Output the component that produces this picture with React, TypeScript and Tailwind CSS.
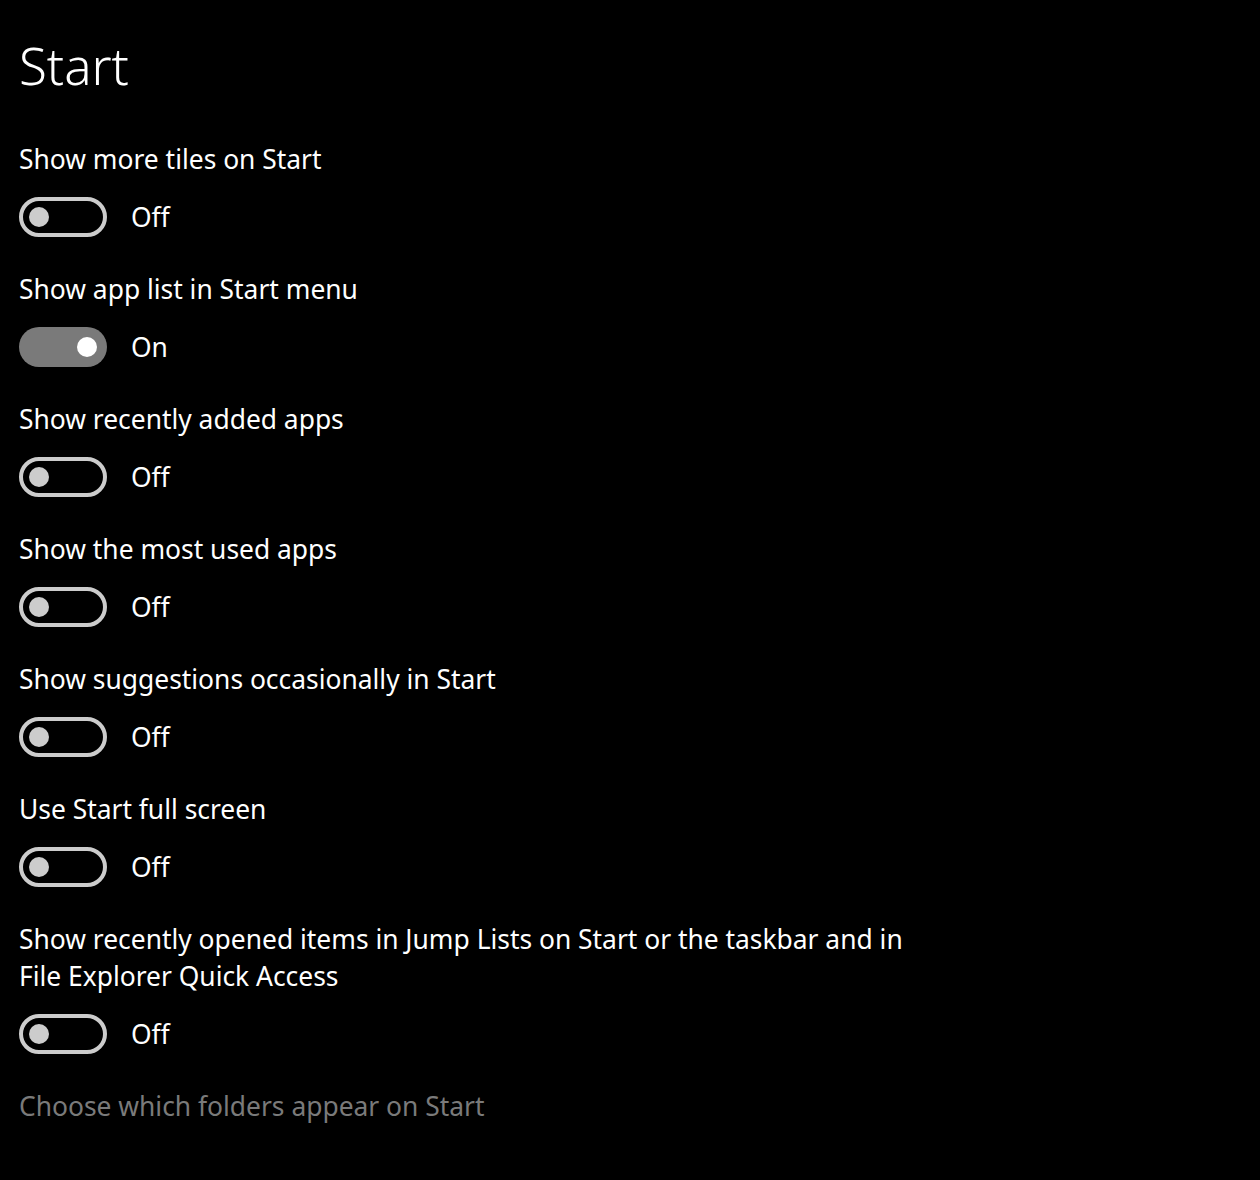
import { useState } from "react";

type Setting = {
  label: string;
  on: boolean;
};

const initialSettings: Setting[] = [
  { label: "Show more tiles on Start", on: false },
  { label: "Show app list in Start menu", on: true },
  { label: "Show recently added apps", on: false },
  { label: "Show the most used apps", on: false },
  { label: "Show suggestions occasionally in Start", on: false },
  { label: "Use Start full screen", on: false },
  {
    label:
      "Show recently opened items in Jump Lists on Start or the taskbar and in File Explorer Quick Access",
    on: false,
  },
];

function Toggle({ on, onChange }: { on: boolean; onChange: () => void }) {
  return (
    <button
      type="button"
      onClick={onChange}
      className="flex items-center gap-[24px]"
    >
      <span
        className={
          on
            ? "flex h-10 w-[88px] items-center justify-end rounded-full bg-[#7a7a7a] pr-[10px]"
            : "flex h-10 w-[88px] items-center rounded-full border-4 border-[#cccccc] pl-[6px]"
        }
      >
        <span
          className={
            on
              ? "h-5 w-5 rounded-full bg-white"
              : "h-5 w-5 rounded-full bg-[#cccccc]"
          }
        />
      </span>
      <span className="text-[26.4px] leading-[37px] text-white">
        {on ? "On" : "Off"}
      </span>
    </button>
  );
}

export default function App() {
  const [settings, setSettings] = useState(initialSettings);

  const toggle = (i: number) =>
    setSettings((s) =>
      s.map((item, idx) => (idx === i ? { ...item, on: !item.on } : item))
    );

  return (
    <div
      className="min-h-[1180px] bg-black px-[19px] pt-[23px] text-white"
      style={{ fontFamily: '"Segoe UI", "Noto Sans", sans-serif' }}
    >
      <h1 className="text-[51px] font-light leading-[84px]">Start</h1>
      <div className="mt-[34px] flex flex-col">
        {settings.map((s, i) => (
          <div key={s.label} className="mb-[34px] flex flex-col gap-[19px]">
            <p className="max-w-[910px] text-[26.4px] leading-[37px]">
              {s.label}
            </p>
            <Toggle on={s.on} onChange={() => toggle(i)} />
          </div>
        ))}
        <p className="text-[26.4px] leading-[37px] text-[#7a7a7a]">
          Choose which folders appear on Start
        </p>
      </div>
    </div>
  );
}
